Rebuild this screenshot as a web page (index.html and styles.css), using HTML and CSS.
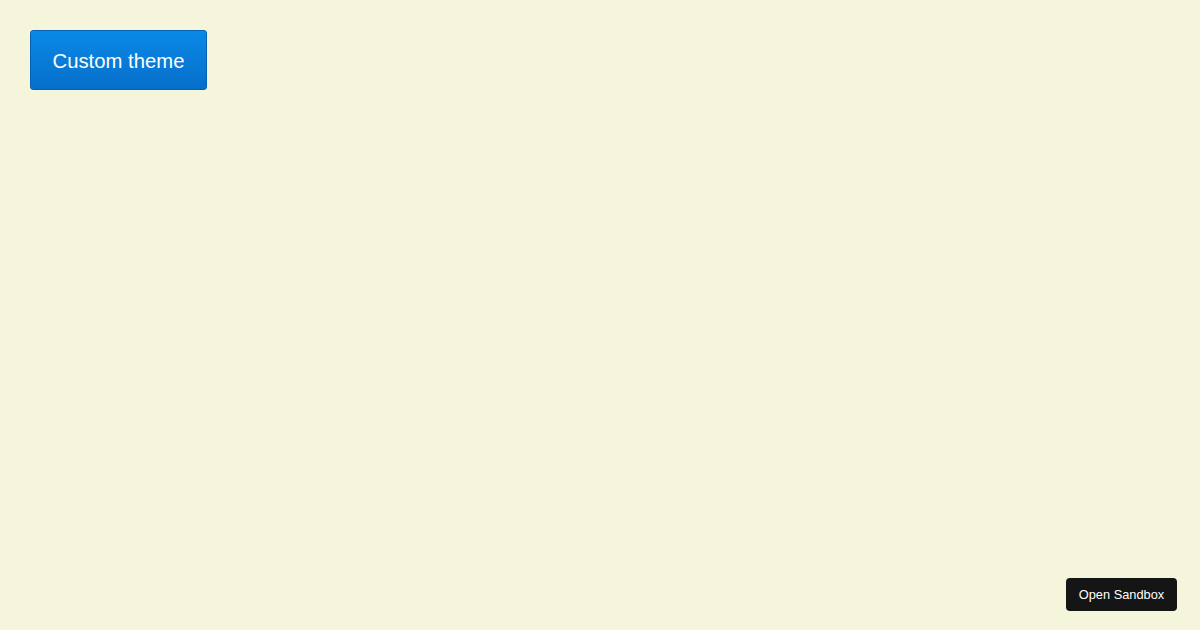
FILE: index.html
```html
<!DOCTYPE html>
<html>
<head>
<meta charset="utf-8">
<link rel="stylesheet" href="styles.css">
</head>
<body>
<div class="page">
  <button class="theme-btn">Custom theme</button>
</div>
<a class="sandbox-btn">Open Sandbox</a>
</body>
</html>
```
FILE: styles.css
```css
html, body {
  margin: 0;
  padding: 0;
  background: #f5f5dc;
  height: 100%;
}
.page {
  padding: 30px;
}
.theme-btn {
  display: block;
  box-sizing: border-box;
  width: 177px;
  height: 60px;
  padding: 2px 0 0;
  text-align: center;
  font-family: "Liberation Sans", Arial, sans-serif;
  font-size: 20.3px;
  color: #ffffff;
  background: linear-gradient(to bottom, #0a89e6, #066fca);
  border: 1px solid #0561b3;
  border-radius: 3px;
  cursor: pointer;
}
.sandbox-btn {
  position: fixed;
  right: 23px;
  bottom: 19px;
  width: 111px;
  height: 33px;
  box-sizing: border-box;
  display: flex;
  align-items: center;
  justify-content: center;
  background: #151515;
  color: #ffffff;
  border-radius: 4px;
  font-family: "Liberation Sans", Arial, sans-serif;
  font-size: 12.8px;
}
```
